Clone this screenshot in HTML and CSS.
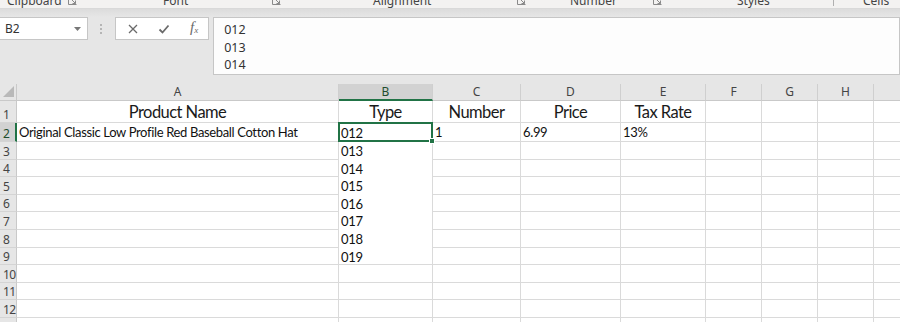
FILE: index.html
```html
<!DOCTYPE html>
<html>
<head>
<meta charset="utf-8">
<link rel="stylesheet" href="styles.css">
</head>
<body>
<div class="app">
  <div class="ribbon">
    <span class="rl w61">Clipboard</span>
    <span class="rl w95"><svg class="launch" viewBox="0 0 9 9"><path d="M0.5 0.5V8.5H8.5" fill="none" stroke="#8a8a8a"/><path d="M3 3L7.5 7.5M7.5 4.5V7.5H4.5" fill="none" stroke="#8a8a8a"/></svg></span>
    <span class="rl w109">Font</span>
    <span class="rl w101"><svg class="launch" viewBox="0 0 9 9"><path d="M0.5 0.5V8.5H8.5" fill="none" stroke="#8a8a8a"/><path d="M3 3L7.5 7.5M7.5 4.5V7.5H4.5" fill="none" stroke="#8a8a8a"/></svg></span>
    <span class="rl w144">Alignment</span>
    <span class="rl w53"><svg class="launch" viewBox="0 0 9 9"><path d="M0.5 0.5V8.5H8.5" fill="none" stroke="#8a8a8a"/><path d="M3 3L7.5 7.5M7.5 4.5V7.5H4.5" fill="none" stroke="#8a8a8a"/></svg></span>
    <span class="rl w83">Number</span>
    <span class="rl w84"><svg class="launch" viewBox="0 0 9 9"><path d="M0.5 0.5V8.5H8.5" fill="none" stroke="#8a8a8a"/><path d="M3 3L7.5 7.5M7.5 4.5V7.5H4.5" fill="none" stroke="#8a8a8a"/></svg></span>
    <span class="rl w96">Styles</span>
    <span class="rl w30"><i class="tick"></i></span>
    <span class="rl">Cells</span>
  </div>

  <div class="fbar">
    <div class="namebox"><span>B2</span><svg class="caret" viewBox="0 0 7 4"><path d="M0 0H7L3.5 4Z" fill="#777"/></svg></div>
    <div class="dots"><i></i><i></i><i></i></div>
    <div class="fnbox">
      <svg class="ico" viewBox="0 0 12 12"><path d="M2 2L10 10M10 2L2 10" stroke="#6a6a6a" stroke-width="1.3" fill="none"/></svg>
      <svg class="ico" viewBox="0 0 12 12"><path d="M1.5 6.5L4.5 9.5L10.5 2.5" stroke="#6a6a6a" stroke-width="1.8" fill="none"/></svg>
      <span class="fx">f<sub>x</sub></span>
    </div>
    <div class="finput">
      <div>012</div>
      <div>013</div>
      <div>014</div>
    </div>
  </div>

  <div class="sheet">
    <div class="corner"><svg viewBox="0 0 12 12"><path d="M12 0V12H0Z" fill="#b9b9b9"/></svg></div>
    <div class="ch">A</div><div class="ch active">B</div><div class="ch">C</div><div class="ch">D</div><div class="ch">E</div><div class="ch">F</div><div class="ch">G</div><div class="ch">H</div><div class="ch"></div>

    <div class="rh">1</div>
    <div class="c big">Product Name</div><div class="c big">Type</div><div class="c big">Number</div><div class="c big">Price</div><div class="c big">Tax Rate</div><div class="c"></div><div class="c"></div><div class="c"></div><div class="c"></div>

    <div class="rh active">2</div>
    <div class="c">Original Classic Low Profile Red Baseball Cotton Hat</div>
    <div class="c bspan">
      <div class="bl first">012<span class="sel"><i class="handle"></i></span></div>
      <div class="bl">013</div>
      <div class="bl">014</div>
      <div class="bl">015</div>
      <div class="bl">016</div>
      <div class="bl">017</div>
      <div class="bl">018</div>
      <div class="bl">019</div>
    </div>
    <div class="c">1</div><div class="c">6.99</div><div class="c">13%</div><div class="c"></div><div class="c"></div><div class="c"></div><div class="c"></div>

    <div class="rh">3</div><div class="c"></div><div class="c"></div><div class="c"></div><div class="c"></div><div class="c"></div><div class="c"></div><div class="c"></div><div class="c"></div>
    <div class="rh">4</div><div class="c"></div><div class="c"></div><div class="c"></div><div class="c"></div><div class="c"></div><div class="c"></div><div class="c"></div><div class="c"></div>
    <div class="rh">5</div><div class="c"></div><div class="c"></div><div class="c"></div><div class="c"></div><div class="c"></div><div class="c"></div><div class="c"></div><div class="c"></div>
    <div class="rh">6</div><div class="c"></div><div class="c"></div><div class="c"></div><div class="c"></div><div class="c"></div><div class="c"></div><div class="c"></div><div class="c"></div>
    <div class="rh">7</div><div class="c"></div><div class="c"></div><div class="c"></div><div class="c"></div><div class="c"></div><div class="c"></div><div class="c"></div><div class="c"></div>
    <div class="rh">8</div><div class="c"></div><div class="c"></div><div class="c"></div><div class="c"></div><div class="c"></div><div class="c"></div><div class="c"></div><div class="c"></div>
    <div class="rh">9</div><div class="c"></div><div class="c"></div><div class="c"></div><div class="c"></div><div class="c"></div><div class="c"></div><div class="c"></div><div class="c"></div>
    <div class="rh">10</div><div class="c"></div><div class="c"></div><div class="c"></div><div class="c"></div><div class="c"></div><div class="c"></div><div class="c"></div><div class="c"></div><div class="c"></div>
    <div class="rh">11</div><div class="c"></div><div class="c"></div><div class="c"></div><div class="c"></div><div class="c"></div><div class="c"></div><div class="c"></div><div class="c"></div><div class="c"></div>
    <div class="rh">12</div><div class="c"></div><div class="c"></div><div class="c"></div><div class="c"></div><div class="c"></div><div class="c"></div><div class="c"></div><div class="c"></div><div class="c"></div>
    <div class="rh">13</div><div class="c"></div><div class="c"></div><div class="c"></div><div class="c"></div><div class="c"></div><div class="c"></div><div class="c"></div><div class="c"></div><div class="c"></div>
  </div>
</div>
</body>
</html>
```

FILE: styles.css
```css
* { box-sizing: border-box; }
html, body { margin: 0; padding: 0; }
body {
  width: 900px;
  height: 322px;
  overflow: hidden;
  background: #e6e6e6;
  font-family: Lato, "Open Sans", sans-serif;
}
.app { width: 900px; height: 322px; overflow: hidden; }

/* ribbon strip (cut off group labels) */
.ribbon {
  height: 9px;
  background: #f3f2f1;
  display: flex;
  padding-left: 7px;
  overflow: hidden;
  border-bottom: 1px solid #d9d9d9;
  font-family: "Noto Sans", sans-serif;
  font-size: 12px;
  color: #444;
}
.rl {
  flex: none;
  margin-top: -6px;
  height: 14px;
  line-height: 14px;
  display: flex;
  align-items: flex-end;
  white-space: nowrap;
}
.w61 { width: 61px; } .w95 { width: 95px; } .w109 { width: 109px; } .w101 { width: 101px; }
.w144 { width: 144px; } .w53 { width: 53px; } .w83 { width: 83px; } .w84 { width: 84px; }
.w96 { width: 96px; } .w30 { width: 30px; }
.launch { width: 9px; height: 9px; margin-bottom: 3px; }
.tick { display: block; width: 1px; height: 8px; background: #b0b0b0; margin-bottom: 2px; }

/* formula bar */
.fbar {
  display: flex;
  align-items: flex-start;
  padding-top: 8px;
  height: 66px;
  background: linear-gradient(#dcdcdc, #e6e6e6 8px);
  font-family: "Noto Sans", sans-serif;
  font-size: 12px;
  color: #333;
}
.namebox {
  width: 88px;
  height: 23px;
  background: #fff;
  border: 1px solid #c6c6c6;
  border-left: none;
  display: flex;
  align-items: center;
  justify-content: space-between;
  padding: 0 6px 0 5px;
}
.caret { width: 7px; height: 4px; }
.dots {
  width: 27px;
  height: 23px;
  display: flex;
  flex-direction: column;
  align-items: center;
  justify-content: center;
  gap: 2px;
}
.dots i { display: block; width: 2px; height: 2px; background: #b5b5b5; }
.fnbox {
  width: 95px;
  height: 23px;
  background: #fff;
  border: 1px solid #c6c6c6;
  display: flex;
  align-items: center;
  justify-content: space-between;
  padding: 0 10px 0 11px;
}
.ico { width: 12px; height: 12px; }
.fx {
  font-family: "Liberation Serif", serif;
  font-style: italic;
  font-size: 15px;
  line-height: 15px;
  color: #6a6a6a;
}
.fx sub { font-size: 9px; vertical-align: -1px; }
.finput {
  margin-left: 4px;
  width: 690px;
  height: 58px;
  background: #fdfdfd;
  border: 1px solid #c6c6c6;
  padding: 3px 0 0 10px;
  font-size: 12.5px;
  line-height: 17.5px;
  color: #333;
}

/* sheet */
.sheet {
  margin-top: 9px;
  display: grid;
  grid-template-columns: 17px 322px 94px 88px 100px 85px 56px 56px 56px 40px;
  grid-template-rows: 17px 22px 19px 18px 17px 18px 17px 18px 18px 17px 18px 17px 18px 18px;
  background: #fff;
  font-family: Lato, "Open Sans", sans-serif;
}
.corner {
  background: #e6e6e6;
  border-right: 1px solid #c9c9c9;
  border-bottom: 1px solid #c9c9c9;
  display: flex;
  align-items: flex-end;
  justify-content: flex-end;
  padding: 0 2px 3px 0;
}
.corner svg { width: 11px; height: 11px; }
.ch {
  background: #e6e6e6;
  border-right: 1px solid #cfcfcf;
  border-bottom: 1px solid #c9c9c9;
  font-family: "Noto Sans", sans-serif;
  font-size: 12px;
  color: #444;
  text-align: center;
  line-height: 16px;
}
.ch.active {
  background: #d2d2d2;
  border-bottom: 2px solid #217346;
  color: #1e4d2e;
}
.rh {
  background: #e6e6e6;
  border-right: 1px solid #c9c9c9;
  border-bottom: 1px solid #d4d4d4;
  font-family: "Noto Sans", sans-serif;
  font-size: 12px;
  color: #444;
  padding-left: 3px;
  display: flex;
  align-items: flex-end;
  line-height: 15px;
  letter-spacing: -0.5px;
}
.rh.active {
  border-right: 2px solid #217346;
  background: #d2d2d2;
  color: #1e4d2e;
}
.c {
  border-right: 1px solid #dadada;
  border-bottom: 1px solid #dadada;
  font-size: 13px;
  letter-spacing: -0.35px;
  color: #111;
  white-space: nowrap;
  overflow: visible;
  padding-left: 2px;
  display: flex;
  align-items: flex-end;
  line-height: 16px;
  padding-bottom: 1px;
}
.c.big {
  font-size: 16.5px;
  letter-spacing: -0.55px;
  justify-content: center;
  padding-left: 0;
  line-height: 17px;
  color: #1a1a1a;
}
.bspan {
  grid-row: span 8;
  display: block;
  padding: 0;
  position: relative;
}
.bl {
  height: 17.6px;
  line-height: 18.4px;
  padding-left: 2px;
}
.bl.first {
  height: 19px;
  line-height: 20px;
  position: relative;
}
.sel {
  position: absolute;
  left: -1px;
  top: -1px;
  width: 95px;
  height: 20px;
  border: 2px solid #217346;
}
.handle {
  position: absolute;
  right: -4px;
  bottom: -4px;
  width: 6px;
  height: 6px;
  background: #217346;
  border: 1px solid #fff;
}
```
